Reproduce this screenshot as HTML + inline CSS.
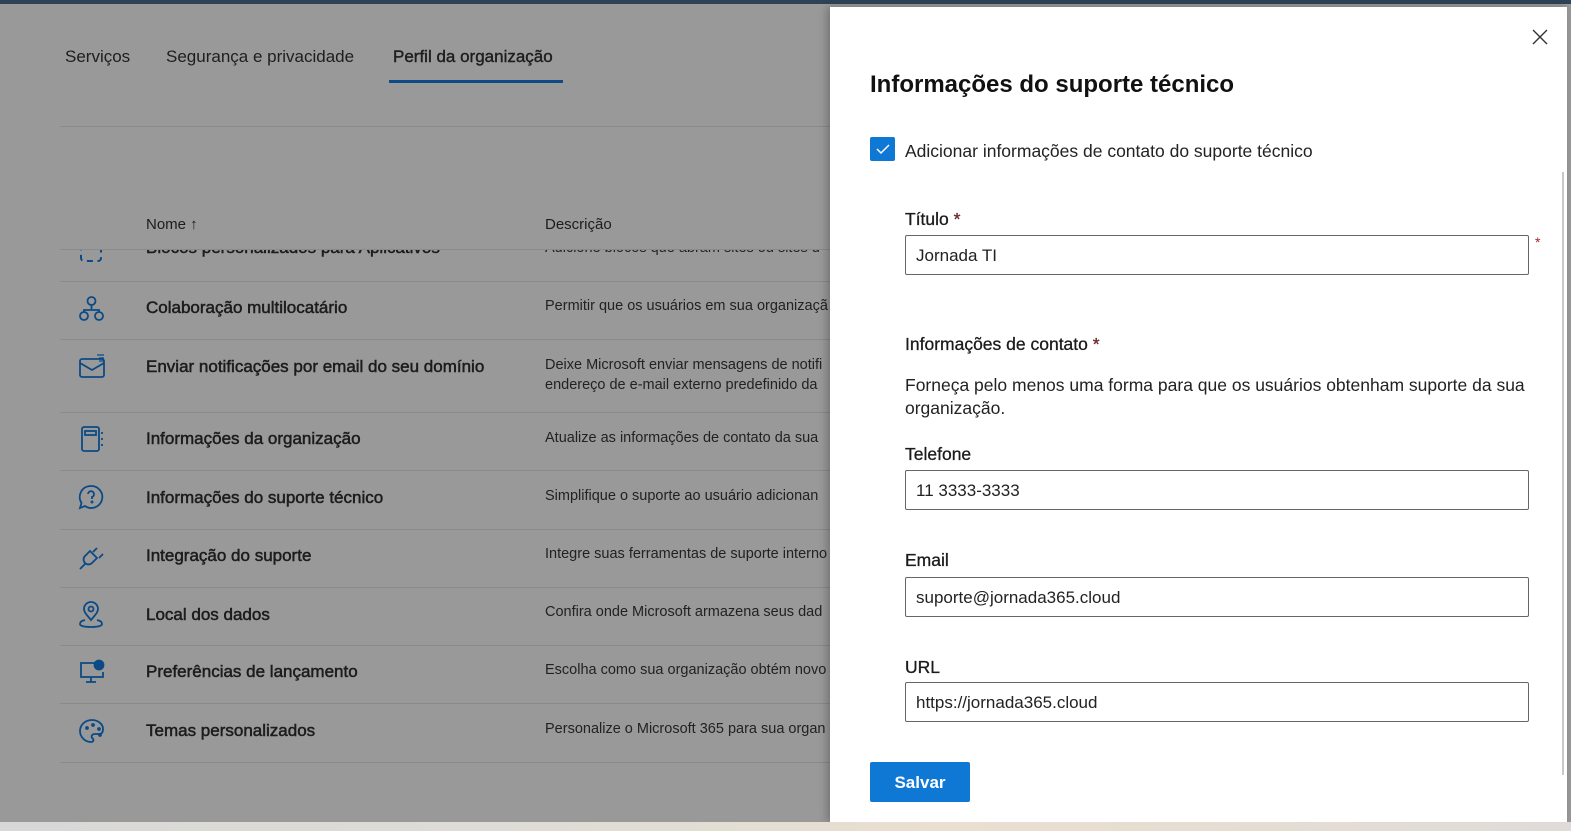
<!DOCTYPE html>
<html><head><meta charset="utf-8"><style>
*{margin:0;padding:0;box-sizing:border-box}
body{width:1571px;height:831px;overflow:hidden;background:#999;font-family:"Liberation Sans",sans-serif;position:relative;color:#1c1c1c}
.a{position:absolute;white-space:nowrap}
.top{left:0;top:0;width:1571px;height:4px;background:#2f4256}
.bot{left:0;top:822px;width:1571px;height:9px;background:linear-gradient(90deg,#d8d8d8,#e0ddd5 40%,#eadfd0 60%,#e0dbd8)}
.tab{top:47px;font-size:17px;color:#1e1e1e}
.hl{left:60px;width:770px;height:1px;background:#8a8a8a}
.nm{left:146px;font-size:17px;-webkit-text-stroke:.5px #1c1c1c}
.ds{left:545px;font-size:14.5px;color:#222}
.panel{left:830px;top:7px;width:737px;height:815px;background:#fff;box-shadow:-3px 0 8px rgba(0,0,0,.25)}
.lbl{font-size:17.5px;color:#1b1b1b;-webkit-text-stroke:.3px #1b1b1b}
.req{color:#a4262c}
.inp{left:75px;width:624px;height:40px;border:1px solid #666;border-radius:2px;font-size:17px;padding:10px 10px;color:#222}
</style></head><body>
<div class="a top"></div>
<div class="a tab" style="left:65px">Serviços</div>
<div class="a tab" style="left:166px">Segurança e privacidade</div>
<div class="a tab" style="left:393px;-webkit-text-stroke:.4px #1e1e1e">Perfil da organização</div>
<div class="a" style="left:389px;top:80px;width:174px;height:3px;background:#0f4a86"></div>
<div class="a hl" style="top:126px"></div>
<div class="a" style="left:146px;top:216px;font-size:15px">Nome ↑</div>
<div class="a" style="left:545px;top:216px;font-size:15px">Descrição</div>
<div class="a" style="left:60px;top:249px;width:770px;height:1px;background:#8a8a8a"></div>
<div class="a" style="left:60px;top:250px;width:770px;height:12px;overflow:hidden">
 <div class="a nm" style="left:86px;top:-12px">Blocos personalizados para Aplicativos</div>
 <div class="a ds" style="left:485px;top:-10px">Adicione blocos que abram sites ou sites d</div>
 <div class="a" style="left:20px;top:-10px;width:22px;height:22px;border:2px dashed #0b4a85;border-radius:4px"></div>
</div>
<div class="a hl" style="top:281px"></div>
<div class="a hl" style="top:339px"></div>
<div class="a hl" style="top:412px"></div>
<div class="a hl" style="top:470px"></div>
<div class="a hl" style="top:529px"></div>
<div class="a hl" style="top:587px"></div>
<div class="a hl" style="top:645px"></div>
<div class="a hl" style="top:703px"></div>
<div class="a hl" style="top:762px"></div>

<div class="a nm" style="top:298px">Colaboração multilocatário</div>
<div class="a ds" style="top:298px">Permitir que os usuários em sua organizaçã</div>
<div class="a nm" style="top:357px">Enviar notificações por email do seu domínio</div>
<div class="a ds" style="top:357px">Deixe Microsoft enviar mensagens de notifi</div>
<div class="a ds" style="top:377px">endereço de e-mail externo predefinido da</div>
<div class="a nm" style="top:429px">Informações da organização</div>
<div class="a ds" style="top:430px">Atualize as informações de contato da sua</div>
<div class="a nm" style="top:488px">Informações do suporte técnico</div>
<div class="a ds" style="top:488px">Simplifique o suporte ao usuário adicionan</div>
<div class="a nm" style="top:546px">Integração do suporte</div>
<div class="a ds" style="top:546px">Integre suas ferramentas de suporte interno</div>
<div class="a nm" style="top:605px">Local dos dados</div>
<div class="a ds" style="top:604px">Confira onde Microsoft armazena seus dad</div>
<div class="a nm" style="top:662px">Preferências de lançamento</div>
<div class="a ds" style="top:662px">Escolha como sua organização obtém novo</div>
<div class="a nm" style="top:721px">Temas personalizados</div>
<div class="a ds" style="top:721px">Personalize o Microsoft 365 para sua organ</div>

<svg class="a" style="left:0;top:0" width="830" height="831" fill="none" stroke="#0b4a85" stroke-width="1.8">
 <circle cx="91.5" cy="301" r="4"/><circle cx="84" cy="316" r="4"/><circle cx="99" cy="316" r="4"/><path d="M91.5 305v4M84 312v-2h15v2"/>
 <rect x="80" y="359" width="24" height="18" rx="2"/><path d="M80 363l12 7 12-7"/><path d="M97 355h7M99 358h5M99 361h5" stroke-width="1.3"/>
 <rect x="82" y="427" width="17" height="24" rx="2"/><rect x="85" y="431" width="11" height="4"/><path d="M102 432v2M102 438v2M102 444v2"/>
 <path d="M91 486a11 11 0 1 1-6 20l-5 2 1.5-5A11 11 0 0 1 91 486z"/><path d="M88 494a3 3 0 1 1 4 3v2"/><circle cx="92" cy="502" r=".6"/>
 <path d="M80 569l6-6M85 563a5 5 0 0 1 0-7l5-5 7 7-5 5a5 5 0 0 1-7 0z"/><path d="M93 552l4-4M99 558l4-4"/>
 <path d="M91 620c-5-6-7-8-7-11a7 7 0 0 1 14 0c0 3-2 5-7 11z"/><circle cx="91" cy="609" r="2.5"/><path d="M85 620c-4 1-5 2-5 4 0 2 5 3 11 3s11-1 11-3c0-2-1-3-5-4"/>
 <path d="M95 663h-14v14h22v-5M86 682h10M91 677v5"/><circle cx="99" cy="665" r="4.5" fill="#0b4a85"/>
 <path d="M92 720c-7 0-12 5-12 11 0 6 5 11 11 11 3 0 3-3 1-4-1-2 0-4 3-4h4c3 0 4-2 4-5 0-5-5-9-11-9z"/><circle cx="87" cy="728" r="1" fill="#0b4a85"/><circle cx="93" cy="725" r="1" fill="#0b4a85"/><circle cx="99" cy="729" r="1" fill="#0b4a85"/><circle cx="100" cy="735" r="1" fill="#0b4a85"/>
</svg>

<div class="a panel">
 <svg class="a" style="left:702px;top:22px" width="16" height="16" stroke="#333" stroke-width="1.4"><path d="M1 1l14 14M15 1L1 15"/></svg>
 <div class="a" style="left:40px;top:64px;font-size:24px;font-weight:bold;color:#111">Informações do suporte técnico</div>
 <div class="a" style="left:40px;top:130px;width:25px;height:24px;background:#0f78d4;border-radius:2px"></div>
 <svg class="a" style="left:40px;top:130px" width="25" height="24" fill="none" stroke="#fff" stroke-width="1.5"><path d="M7 12l4 4 8-8"/></svg>
 <div class="a" style="left:75px;top:134px;font-size:17.5px;color:#222">Adicionar informações de contato do suporte técnico</div>
 <div class="a lbl" style="left:75px;top:202px">Título <span class="req">*</span></div>
 <div class="a inp" style="top:228px">Jornada TI</div>
 <div class="a req" style="left:705px;top:227px;font-size:14px">*</div>
 <div class="a lbl" style="left:75px;top:327px">Informações de contato <span class="req">*</span></div>
 <div class="a" style="left:75px;top:367px;font-size:17.5px;line-height:23px;color:#222;white-space:normal;width:630px">Forneça pelo menos uma forma para que os usuários obtenham suporte da sua organização.</div>
 <div class="a lbl" style="left:75px;top:437px">Telefone</div>
 <div class="a inp" style="top:463px">11 3333-3333</div>
 <div class="a lbl" style="left:75px;top:543px">Email</div>
 <div class="a inp" style="top:570px">suporte@jornada365.cloud</div>
 <div class="a lbl" style="left:75px;top:650px">URL</div>
 <div class="a inp" style="top:675px">https://jornada365.cloud</div>
 <div class="a" style="left:40px;top:755px;width:100px;height:40px;background:#0f78d4;border-radius:2px;color:#fff;font-size:17px;font-weight:bold;text-align:center;line-height:41px">Salvar</div>
 <div class="a" style="left:732px;top:165px;width:2px;height:603px;background:#c8c8c8"></div>
</div>
<div class="a bot"></div>
</body></html>
